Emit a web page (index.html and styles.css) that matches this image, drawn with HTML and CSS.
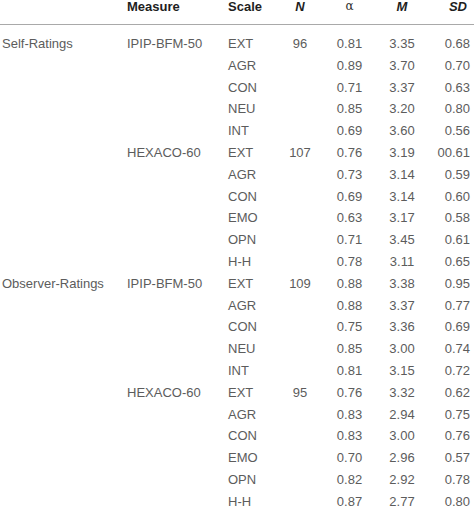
FILE: index.html
```html
<!DOCTYPE html>
<html lang="en">
<head>
<meta charset="utf-8">
<title>Descriptive statistics</title>
<link rel="stylesheet" href="styles.css">
</head>
<body>
<div class="stats">
  <div class="row head">
    <div class="c"></div>
    <div class="c">Measure</div>
    <div class="c">Scale</div>
    <div class="c num"><i>N</i></div>
    <div class="c num alpha">α</div>
    <div class="c num"><i>M</i></div>
    <div class="c sd"><i>SD</i></div>
  </div>
  <div class="body">
    <div class="row"><div class="c">Self-Ratings</div><div class="c">IPIP-BFM-50</div><div class="c">EXT</div><div class="c num">96</div><div class="c num">0.81</div><div class="c num">3.35</div><div class="c sd">0.68</div></div>
    <div class="row"><div class="c"></div><div class="c"></div><div class="c">AGR</div><div class="c num"></div><div class="c num">0.89</div><div class="c num">3.70</div><div class="c sd">0.70</div></div>
    <div class="row"><div class="c"></div><div class="c"></div><div class="c">CON</div><div class="c num"></div><div class="c num">0.71</div><div class="c num">3.37</div><div class="c sd">0.63</div></div>
    <div class="row"><div class="c"></div><div class="c"></div><div class="c">NEU</div><div class="c num"></div><div class="c num">0.85</div><div class="c num">3.20</div><div class="c sd">0.80</div></div>
    <div class="row"><div class="c"></div><div class="c"></div><div class="c">INT</div><div class="c num"></div><div class="c num">0.69</div><div class="c num">3.60</div><div class="c sd">0.56</div></div>
    <div class="row"><div class="c"></div><div class="c">HEXACO-60</div><div class="c">EXT</div><div class="c num">107</div><div class="c num">0.76</div><div class="c num">3.19</div><div class="c sd">00.61</div></div>
    <div class="row"><div class="c"></div><div class="c"></div><div class="c">AGR</div><div class="c num"></div><div class="c num">0.73</div><div class="c num">3.14</div><div class="c sd">0.59</div></div>
    <div class="row"><div class="c"></div><div class="c"></div><div class="c">CON</div><div class="c num"></div><div class="c num">0.69</div><div class="c num">3.14</div><div class="c sd">0.60</div></div>
    <div class="row"><div class="c"></div><div class="c"></div><div class="c">EMO</div><div class="c num"></div><div class="c num">0.63</div><div class="c num">3.17</div><div class="c sd">0.58</div></div>
    <div class="row"><div class="c"></div><div class="c"></div><div class="c">OPN</div><div class="c num"></div><div class="c num">0.71</div><div class="c num">3.45</div><div class="c sd">0.61</div></div>
    <div class="row"><div class="c"></div><div class="c"></div><div class="c">H-H</div><div class="c num"></div><div class="c num">0.78</div><div class="c num">3.11</div><div class="c sd">0.65</div></div>
    <div class="row"><div class="c">Observer-Ratings</div><div class="c">IPIP-BFM-50</div><div class="c">EXT</div><div class="c num">109</div><div class="c num">0.88</div><div class="c num">3.38</div><div class="c sd">0.95</div></div>
    <div class="row"><div class="c"></div><div class="c"></div><div class="c">AGR</div><div class="c num"></div><div class="c num">0.88</div><div class="c num">3.37</div><div class="c sd">0.77</div></div>
    <div class="row"><div class="c"></div><div class="c"></div><div class="c">CON</div><div class="c num"></div><div class="c num">0.75</div><div class="c num">3.36</div><div class="c sd">0.69</div></div>
    <div class="row"><div class="c"></div><div class="c"></div><div class="c">NEU</div><div class="c num"></div><div class="c num">0.85</div><div class="c num">3.00</div><div class="c sd">0.74</div></div>
    <div class="row"><div class="c"></div><div class="c"></div><div class="c">INT</div><div class="c num"></div><div class="c num">0.81</div><div class="c num">3.15</div><div class="c sd">0.72</div></div>
    <div class="row"><div class="c"></div><div class="c">HEXACO-60</div><div class="c">EXT</div><div class="c num">95</div><div class="c num">0.76</div><div class="c num">3.32</div><div class="c sd">0.62</div></div>
    <div class="row"><div class="c"></div><div class="c"></div><div class="c">AGR</div><div class="c num"></div><div class="c num">0.83</div><div class="c num">2.94</div><div class="c sd">0.75</div></div>
    <div class="row"><div class="c"></div><div class="c"></div><div class="c">CON</div><div class="c num"></div><div class="c num">0.83</div><div class="c num">3.00</div><div class="c sd">0.76</div></div>
    <div class="row"><div class="c"></div><div class="c"></div><div class="c">EMO</div><div class="c num"></div><div class="c num">0.70</div><div class="c num">2.96</div><div class="c sd">0.57</div></div>
    <div class="row"><div class="c"></div><div class="c"></div><div class="c">OPN</div><div class="c num"></div><div class="c num">0.82</div><div class="c num">2.92</div><div class="c sd">0.78</div></div>
    <div class="row"><div class="c"></div><div class="c"></div><div class="c">H-H</div><div class="c num"></div><div class="c num">0.87</div><div class="c num">2.77</div><div class="c sd">0.80</div></div>
  </div>
</div>
</body>
</html>
```

FILE: styles.css
```css
html, body {
  margin: 0;
  padding: 0;
  background: #ffffff;
}

body {
  font-family: "Liberation Sans", Arial, "Helvetica Neue", sans-serif;
  font-size: 13px;
  color: #5c5c5c;
  overflow: hidden;
}

.stats {
  width: 474px;
}

.row {
  display: grid;
  grid-template-columns: 125px 101px 52px 40px 59px 46px 45px;
  padding-left: 2px;
  height: 21.8px;
  line-height: 21.8px;
  white-space: nowrap;
}

.c {
  min-width: 0;
}

.num {
  text-align: center;
}

.sd {
  text-align: right;
  direction: rtl;
}

.head {
  height: 24px;
  line-height: 13px;
  border-bottom: 1px solid #a9a9a9;
  color: #1e1e1e;
  font-weight: bold;
}

.head i {
  font-style: italic;
}

.head .sd {
  padding-right: 3px;
}

.head .alpha {
  font-weight: normal;
  font-family: "DejaVu Serif", "Liberation Serif", serif;
  font-size: 12px;
  color: #333333;
}

.body {
  padding-top: 8px;
}
```
